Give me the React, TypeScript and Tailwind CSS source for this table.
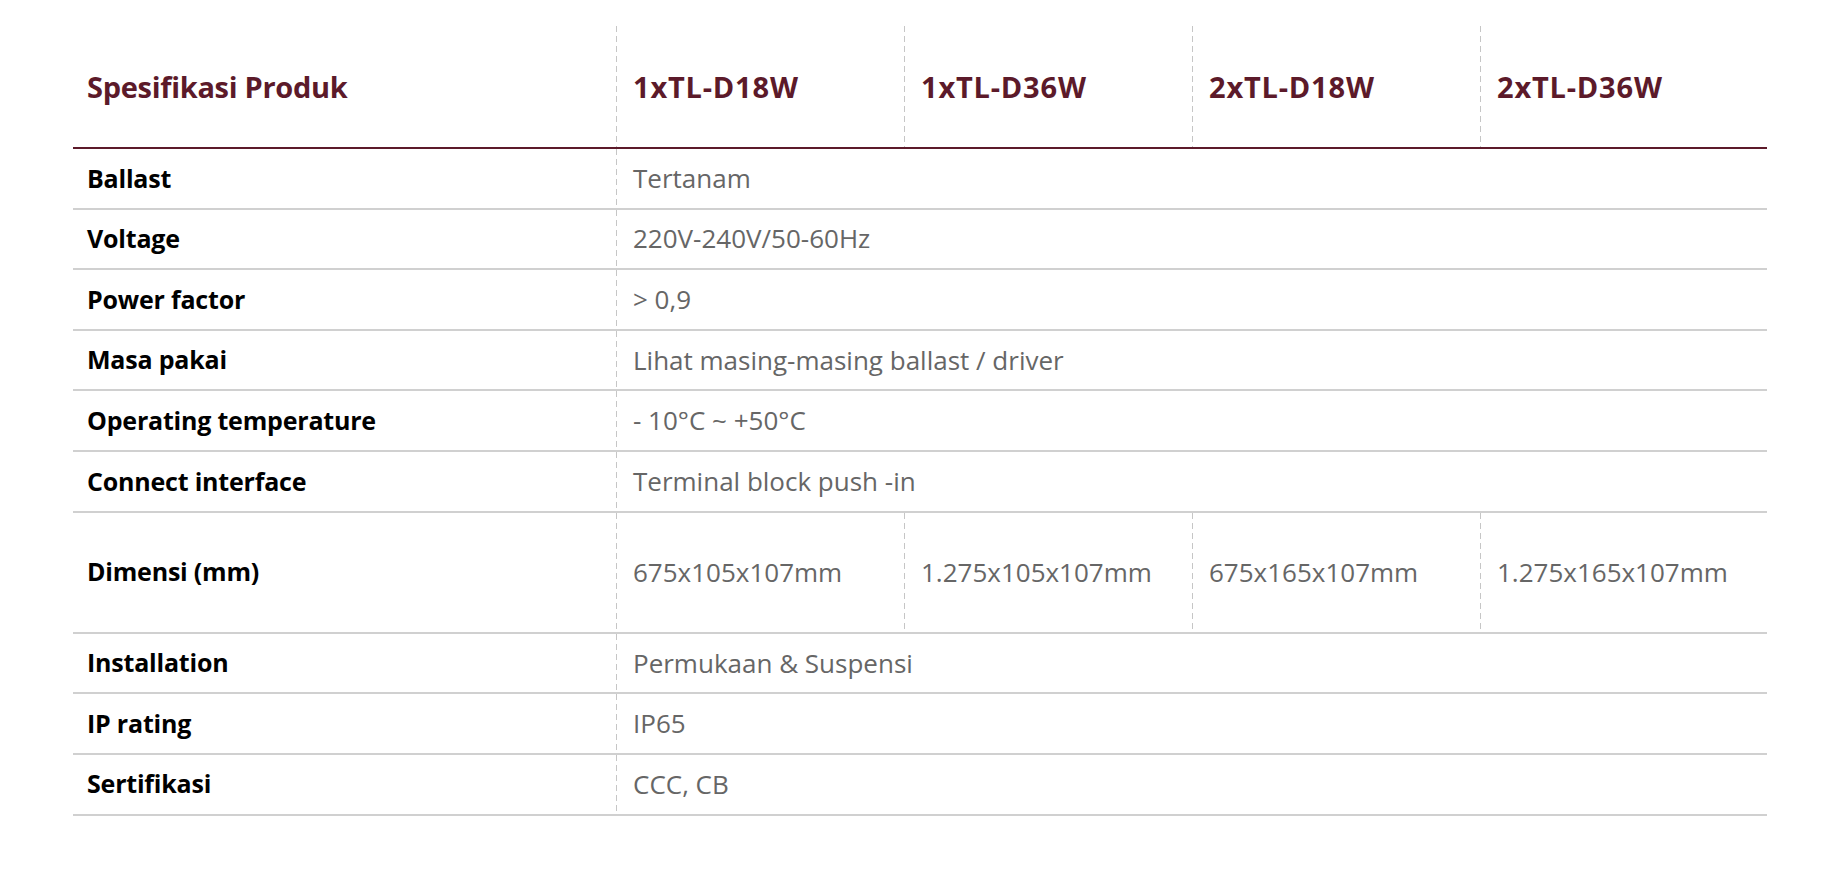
import React from "react";

const rows: { label: string; value?: string; values?: string[] }[] = [
  { label: "Ballast", value: "Tertanam" },
  { label: "Voltage", value: "220V-240V/50-60Hz" },
  { label: "Power factor", value: "> 0,9" },
  { label: "Masa pakai", value: "Lihat masing-masing ballast / driver" },
  { label: "Operating temperature", value: "- 10°C ~ +50°C" },
  { label: "Connect interface", value: "Terminal block push -in" },
  {
    label: "Dimensi (mm)",
    values: ["675x105x107mm", "1.275x105x107mm", "675x165x107mm", "1.275x165x107mm"],
  },
  { label: "Installation", value: "Permukaan & Suspensi" },
  { label: "IP rating", value: "IP65" },
  { label: "Sertifikasi", value: "CCC, CB" },
];

const heads = ["1xTL-D18W", "1xTL-D36W", "2xTL-D18W", "2xTL-D36W"];

const dashed =
  "bg-[linear-gradient(to_bottom,#c6c6c6_0,#c6c6c6_6px,transparent_6px,transparent_10px)] bg-[length:1px_10px] bg-repeat-y bg-left-top";

export default function App() {
  return (
    <div
      className="w-[1840px] h-[884px] bg-white pt-[26px] pl-[73px]"
      style={{ fontFamily: '"Open Sans", "Noto Sans", sans-serif' }}
    >
      <div className="w-[1694px]">
        <div className="grid grid-cols-[543px_288px_288px_288px_287px] h-[123px] border-b-2 border-[#5c1a2a]">
          <div className="flex items-center pl-[14px] text-[29px] font-bold tracking-[-0.3px] text-[#5c1a2a]">
            Spesifikasi Produk
          </div>
          {heads.map((h) => (
            <div
              key={h}
              className={
                "flex items-center pl-[17px] text-[29px] font-bold tracking-[0.8px] text-[#5c1a2a] " +
                dashed
              }
            >
              {h}
            </div>
          ))}
        </div>
        {rows.map((r) => (
          <div
            key={r.label}
            className={
              "grid grid-cols-[543px_288px_288px_288px_287px] border-b-2 border-[#d0d0d0] " +
              (r.values ? "h-[121.2px]" : "h-[60.6px]")
            }
          >
            <div className="flex items-center pl-[14px] text-[25px] font-bold tracking-[-0.2px] text-black">
              {r.label}
            </div>
            {r.values ? (
              r.values.map((v) => (
                <div
                  key={v}
                  className={"flex items-center pl-[17px] text-[26px] text-[#666666] " + dashed}
                >
                  {v}
                </div>
              ))
            ) : (
              <div className={"col-span-4 flex items-center pl-[17px] text-[26px] text-[#666666] " + dashed}>
                {r.value}
              </div>
            )}
          </div>
        ))}
      </div>
    </div>
  );
}
